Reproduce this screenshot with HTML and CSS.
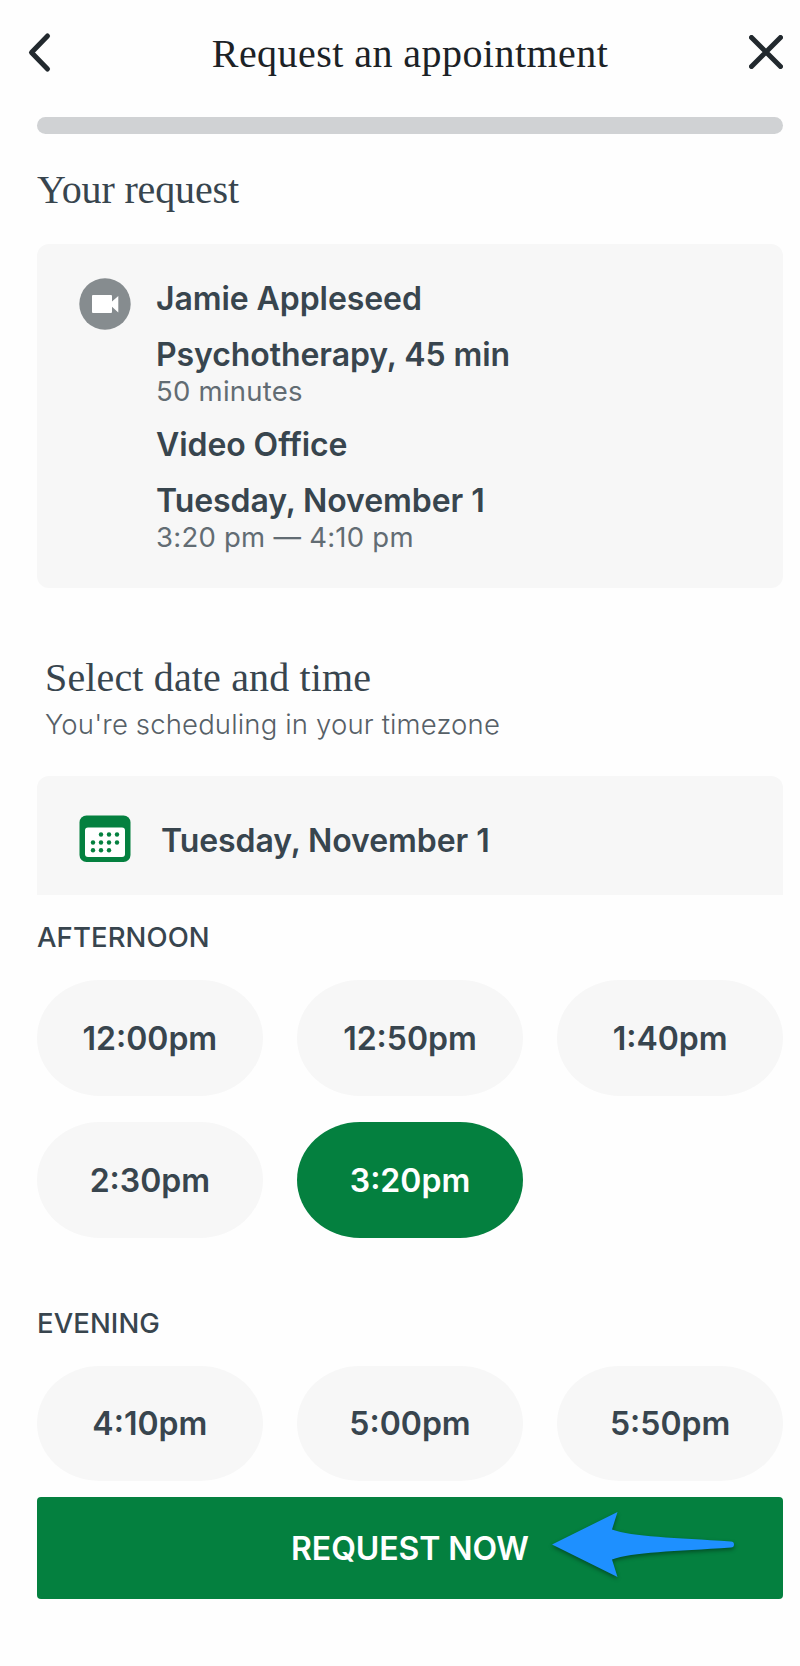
FILE: index.html
```html
<!DOCTYPE html>
<html lang="en">
<head>
  <meta charset="utf-8">
  <title>Request an appointment</title>
  <link rel="stylesheet" href="styles.css">
</head>
<body>
  <header class="header">
    <button class="icon-btn back" aria-label="Back">
      <svg width="24" height="42" viewBox="0 0 24 42"><path d="M19.5 4 L3.5 20.5 L19.5 37" fill="none" stroke="#22292e" stroke-width="5" stroke-linecap="round" stroke-linejoin="round"/></svg>
    </button>
    <h1>Request an appointment</h1>
    <button class="icon-btn close" aria-label="Close">
      <svg width="34" height="34" viewBox="0 0 34 34"><path d="M2.5 2.5 L31.5 31.5 M31.5 2.5 L2.5 31.5" fill="none" stroke="#22292e" stroke-width="5" stroke-linecap="round"/></svg>
    </button>
  </header>

  <main>
    <div class="progress"></div>

    <h2 class="request-title">Your request</h2>
    <section class="card summary">
      <svg class="video-icon" width="52" height="52" viewBox="0 0 52 52">
        <circle cx="26" cy="26" r="25.7" fill="#868c8f"/>
        <path d="M14 17 H32 Q33 17 33 18 V23.500 L39.300 18 V34.500 L33 28.700 V34 Q33 35 32 35 H14 Q13 35 13 34 V18 Q13 17 14 17 Z" fill="#fff"/>
      </svg>
      <div class="details">
        <div class="item">
          <p class="strong name">Jamie Appleseed</p>
        </div>
        <div class="item">
          <p class="strong service">Psychotherapy, 45 min</p>
          <p class="small duration">50 minutes</p>
        </div>
        <div class="item">
          <p class="strong office">Video Office</p>
        </div>
        <div class="item">
          <p class="strong date">Tuesday, November 1</p>
          <p class="small range">3:20 pm — 4:10 pm</p>
        </div>
      </div>
    </section>

    <div class="select-head">
      <h2>Select date and time</h2>
      <p class="timezone">You're scheduling in your timezone</p>
    </div>
    <section class="card date-card">
      <svg width="52" height="48" viewBox="0 0 52 48">
        <rect x="0.500" y="0.500" width="51" height="46.500" rx="7" fill="#04803f"/>
        <rect x="6" y="12.500" width="40" height="29.500" rx="3" fill="#fff"/>
        <g fill="#04803f">
          <circle cx="22" cy="19.500" r="2.200"/><circle cx="30" cy="19.500" r="2.200"/><circle cx="38" cy="19.500" r="2.200"/>
          <circle cx="14" cy="27.500" r="2.200"/><circle cx="22" cy="27.500" r="2.200"/><circle cx="30" cy="27.500" r="2.200"/><circle cx="38" cy="27.500" r="2.200"/>
          <circle cx="14" cy="35.300" r="2.200"/><circle cx="22" cy="35.300" r="2.200"/><circle cx="30" cy="35.300" r="2.200"/>
        </g>
      </svg>
      <p class="strong">Tuesday, November 1</p>
    </section>

    <h3 class="afternoon">AFTERNOON</h3>
    <div class="slots">
      <button class="slot">12:00pm</button>
      <button class="slot">12:50pm</button>
      <button class="slot">1:40pm</button>
      <button class="slot">2:30pm</button>
      <button class="slot selected">3:20pm</button>
    </div>

    <h3 class="evening">EVENING</h3>
    <div class="slots">
      <button class="slot">4:10pm</button>
      <button class="slot">5:00pm</button>
      <button class="slot">5:50pm</button>
    </div>

    <button class="submit">
      REQUEST NOW
      <svg class="arrow" width="190" height="76" viewBox="0 0 190 76">
        <path d="M2 37.500 L67.500 5 L62 22.500 C82 30 125 30.500 181 34.500 A3 3 0 0 1 181 40.500 C125 44.500 82 45 62 52.500 L67.500 70 Z" fill="#1e90ff"/>
      </svg>
    </button>
  </main>
</body>
</html>
```

FILE: styles.css
```css
* {
  box-sizing: border-box;
}

body {
  margin: 0;
  background: #fefefe;
  color: #38454e;
  font-family: Inter, sans-serif;
  font-variant-ligatures: none;
}

h1, h2, h3, p {
  margin: 0;
}

button {
  border: none;
  padding: 0;
  font-family: inherit;
  cursor: pointer;
}

h1, h2 {
  font-family: "Liberation Serif", serif;
  font-size: 40px;
  font-weight: 400;
  line-height: 44px;
}

.header {
  display: grid;
  grid-template-columns: 60px 1fr 60px;
  align-items: center;
  height: 104px;
  padding: 0 17px 0 37px;
}

h1 {
  padding-top: 3px;
  color: #1c2226;
  text-align: center;
  letter-spacing: 0.45px;
}

.icon-btn {
  display: flex;
  background: none;
}

.back {
  margin-left: -9px;
  padding-top: 2px;
}

.close {
  justify-self: end;
}

main {
  padding: 13px 17px 0 37px;
}

.progress {
  height: 17px;
  border-radius: 9px;
  background: #d0d2d4;
}

.request-title {
  margin: 34px 0 32px;
  letter-spacing: -0.15px;
}

.card {
  display: flex;
  padding: 34px 42px;
  border-radius: 12px;
  background: #f7f7f7;
}

.summary {
  height: 344px;
  gap: 25px;
}

.details {
  display: flex;
  flex-direction: column;
  gap: 16px;
  padding-top: 1px;
}

.strong {
  font-size: 32px;
  font-weight: 600;
  line-height: 40px;
  letter-spacing: -0.08px;
}

.small {
  color: #626c73;
  font-size: 27.5px;
  line-height: 34px;
  letter-spacing: 0.25px;
}

.duration,
.range {
  margin: -1px 0 1px;
}

.select-head {
  padding: 68px 8px 32px;
  letter-spacing: 0.15px;
}

.timezone {
  margin-top: 4px;
  color: #566067;
  font-size: 27.5px;
  font-weight: 300;
  line-height: 40px;
}

.date-card {
  align-items: center;
  gap: 30px;
  height: 119px;
  padding: 7px 42px 0;
  border-radius: 12px 12px 0 0;
}

.date-card .strong {
  padding-top: 3px;
}

h3 {
  font-size: 27.5px;
  font-weight: 500;
  line-height: 34px;
  letter-spacing: 0.1px;
}

.afternoon {
  margin: 25px 0 26px;
}

.evening {
  margin: 68px 0 26px;
}

.slots {
  display: grid;
  grid-template-columns: repeat(3, 1fr);
  gap: 26.5px 34.5px;
}

.slot {
  height: 115.5px;
  padding-top: 1px;
  border-radius: 63px / 58px;
  background: #f7f7f7;
  color: #38454e;
  font-size: 32px;
  font-weight: 600;
}

.selected {
  background: #04803f;
  color: #fff;
}

.submit {
  position: relative;
  display: block;
  width: 100%;
  height: 102px;
  margin-top: 16px;
  padding-top: 1px;
  border-radius: 4px;
  background: #04803f;
  color: #fff;
  font-size: 32px;
  font-weight: 600;
  letter-spacing: -0.1px;
}

/* arrow sits on top of the button */
.arrow {
  position: absolute;
  top: 10px;
  left: 513px;
  filter: drop-shadow(0 2px 2px rgba(0, 0, 0, 0.4));
}
```
